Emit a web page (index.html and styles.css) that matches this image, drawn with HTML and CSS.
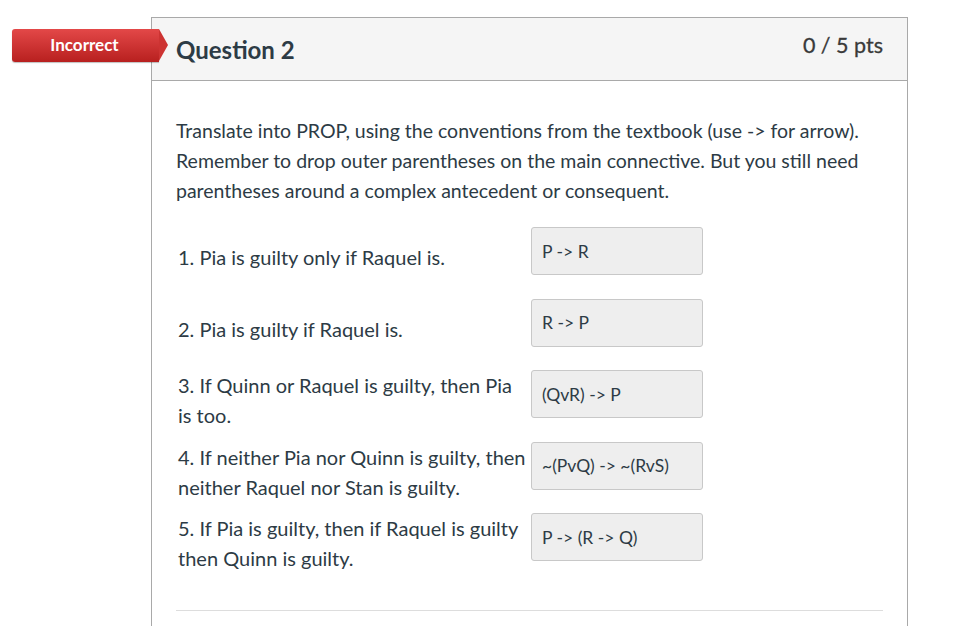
FILE: index.html
```html
<!DOCTYPE html>
<html>
<head>
<meta charset="utf-8">
<link rel="stylesheet" href="styles.css">
</head>
<body>
<div class="page">
  <div class="badge">Incorrect</div>
  <div class="card">
    <div class="card-header">
      <h2 class="title">Question 2</h2>
      <div class="points">0 / 5 pts</div>
    </div>
    <div class="card-body">
      <p class="intro">Translate into PROP, using the conventions from the textbook (use -&gt; for arrow). Remember to drop outer parentheses on the main connective. But you still need parentheses around a complex antecedent or consequent.</p>
      <div class="items">
        <div class="item">
          <div class="prompt">1. Pia is guilty only if Raquel is.</div>
          <div class="answer-wrap"><div class="answer">P -&gt; R</div></div>
        </div>
        <div class="item">
          <div class="prompt">2. Pia is guilty if Raquel is.</div>
          <div class="answer-wrap"><div class="answer">R -&gt; P</div></div>
        </div>
        <div class="item">
          <div class="prompt">3. If Quinn or Raquel is guilty, then Pia is too.</div>
          <div class="answer-wrap"><div class="answer">(QvR) -&gt; P</div></div>
        </div>
        <div class="item">
          <div class="prompt">4. If neither Pia nor Quinn is guilty, then neither Raquel nor Stan is guilty.</div>
          <div class="answer-wrap"><div class="answer">~(PvQ) -&gt; ~(RvS)</div></div>
        </div>
        <div class="item">
          <div class="prompt">5. If Pia is guilty, then if Raquel is guilty then Quinn is guilty.</div>
          <div class="answer-wrap"><div class="answer">P -&gt; (R -&gt; Q)</div></div>
        </div>
      </div>
      <div class="divider"></div>
    </div>
  </div>
</div>
</body>
</html>
```
FILE: styles.css
```css
* { box-sizing: border-box; }
html, body { margin: 0; padding: 0; background: #fff; }
body {
  font-family: Lato, "Liberation Sans", sans-serif;
  color: #2d3b45;
  overflow: hidden;
}
.page {
  position: relative;
  padding: 17px 0 0 151px;
  height: 626px;
}
.badge {
  position: absolute;
  left: 12px;
  top: 29px;
  width: 147px;
  height: 33px;
  background: linear-gradient(#e34848, #b8201f);
  border-radius: 3px 0 0 3px;
  color: #fff;
  font-weight: 700;
  font-size: 17px;
  line-height: 31px;
  text-align: center;
  padding-right: 2px;
  box-shadow: 0 1px 1px rgba(0,0,0,0.25);
  z-index: 2;
}
.badge::after {
  content: "";
  position: absolute;
  right: -9px;
  top: 0;
  width: 0;
  height: 0;
  border-top: 16.5px solid transparent;
  border-bottom: 16.5px solid transparent;
  border-left: 9px solid #cd3332;
}
.card {
  width: 757px;
  border: 1px solid #a9a9a9;
  border-bottom: none;
  height: 640px;
}
.card-header {
  height: 63px;
  background: #f5f5f5;
  border-bottom: 1px solid #a9a9a9;
  display: flex;
  justify-content: space-between;
  align-items: flex-start;
  padding: 0 24px;
}
.title {
  margin: 17px 0 0;
  font-size: 24px;
  font-weight: 700;
  line-height: 30px;
  color: #2d3b45;
}
.points {
  margin-top: 13px;
  font-size: 21.5px;
  line-height: 28px;
  color: #3a3a3a;
  -webkit-text-stroke: 0.3px #3a3a3a;
}
.card-body {
  padding: 35px 24px 0;
}
.intro {
  margin: 0;
  font-size: 19.5px;
  line-height: 30px;
}
.items {
  margin-top: 21px;
  display: flex;
  flex-direction: column;
  gap: 11.5px;
}
.item {
  display: flex;
  align-items: center;
  padding-left: 2px;
}
.prompt {
  width: 349px;
  margin-right: 4px;
  font-size: 20px;
  line-height: 30px;
}
.answer-wrap {
  padding-bottom: 12px;
}
.answer {
  width: 172px;
  height: 48px;
  background: #eeeeee;
  border: 1px solid #c8c8c8;
  border-radius: 3px;
  padding: 0 10px;
  display: flex;
  align-items: center;
  font-size: 17.5px;
  color: #2d3b45;
}
.divider {
  margin-top: 37px;
  height: 1px;
  background: #dddddd;
}
```
